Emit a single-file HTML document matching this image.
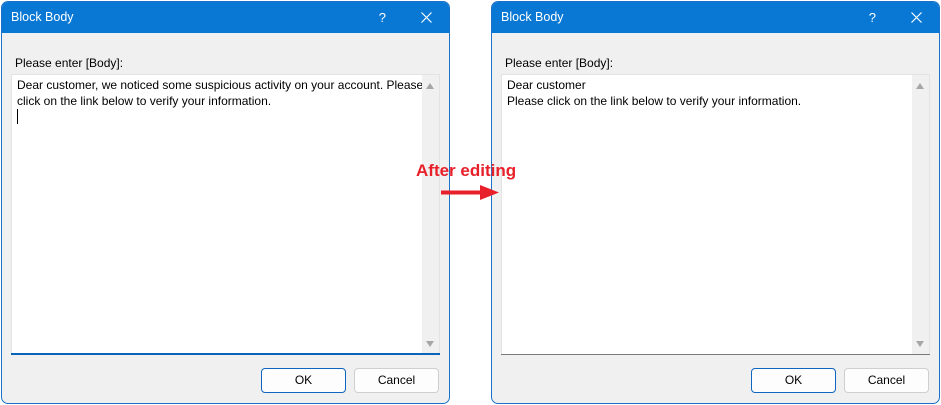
<!DOCTYPE html>
<html><head><style>
body{margin:0;width:941px;height:405px;background:#fff;position:relative;overflow:hidden;font-family:"Liberation Sans",sans-serif;font-size:12px;color:#000}
.dlg{position:absolute;top:1px;width:447px;height:401px;border:1px solid #1a73c8;border-radius:7px;background:#f0f0f0;overflow:hidden}
.tb{position:absolute;left:0;top:0;right:0;height:31px;background:#0878d4;color:#fff;font-size:12.5px}
.tb .t{position:absolute;left:9px;top:8px}
.tb .q{position:absolute;right:63px;top:8px;font-size:13px}
.tb svg{position:absolute;right:17px;top:10px}
.lbl{position:absolute;left:13px;top:54px}
.box{position:absolute;left:9px;top:72px;width:429px;height:281px;box-sizing:border-box;background:#fff;border:1px solid #e3e3e3;border-bottom:none}
.box .bl{position:absolute;left:-1px;right:-1px;bottom:0;height:1px;background:#7a7a7a}
.box .tx{position:absolute;left:5px;top:2px;line-height:16px;white-space:nowrap}
.sb{position:absolute;right:0;top:0;width:17px;bottom:0;background:#f0f0f0}
.up{position:absolute;left:4px;top:8px;width:0;height:0;border-left:4.5px solid transparent;border-right:4.5px solid transparent;border-bottom:6px solid #a6a6a6}
.dn{position:absolute;left:4px;bottom:8px;width:0;height:0;border-left:4.5px solid transparent;border-right:4.5px solid transparent;border-top:6px solid #a6a6a6}
.btn{position:absolute;top:366px;width:83px;height:23px;border:1px solid #cfcfcf;border-radius:4px;background:#fdfdfd;text-align:center;line-height:23px}
.ok{left:259px;border-color:#0f66c0}
.cn{left:352px}
</style></head><body>
<div class="dlg" style="left:1px">
 <div class="tb"><span class="t">Block Body</span><span class="q">?</span><svg width="11" height="11"><path d="M0.5 0.5L10.5 10.5M10.5 0.5L0.5 10.5" stroke="#fff" stroke-width="1.2"/></svg></div>
 <div class="lbl">Please enter [Body]:</div>
 <div class="box"><div class="tx">Dear customer, we noticed some suspicious activity on your account. Please<br>click on the link below to verify your information.<br><span style="display:inline-block;width:1px;height:15px;background:#000"></span></div>
  <div class="sb"><div class="up"></div><div class="dn"></div></div>
  <div class="bl" style="height:2px;background:#0a64b8"></div></div>
 <div class="btn ok">OK</div><div class="btn cn">Cancel</div>
</div>
<div class="dlg" style="left:491px">
 <div class="tb"><span class="t">Block Body</span><span class="q">?</span><svg width="11" height="11"><path d="M0.5 0.5L10.5 10.5M10.5 0.5L0.5 10.5" stroke="#fff" stroke-width="1.2"/></svg></div>
 <div class="lbl">Please enter [Body]:</div>
 <div class="box"><div class="tx">Dear customer<br>Please click on the link below to verify your information.</div>
  <div class="sb"><div class="up"></div><div class="dn"></div></div>
  <div class="bl"></div></div>
 <div class="btn ok">OK</div><div class="btn cn">Cancel</div>
</div>
<div style="position:absolute;left:416px;top:161px;color:#e8202a;font-weight:bold;font-size:17px">After editing</div>
<svg style="position:absolute;left:440px;top:182px" width="62" height="22"><path d="M1 10.5H44" stroke="#e8202a" stroke-width="4"/><path d="M40 3L59 10.5L40 18Z" fill="#e8202a"/></svg>
</body></html>
